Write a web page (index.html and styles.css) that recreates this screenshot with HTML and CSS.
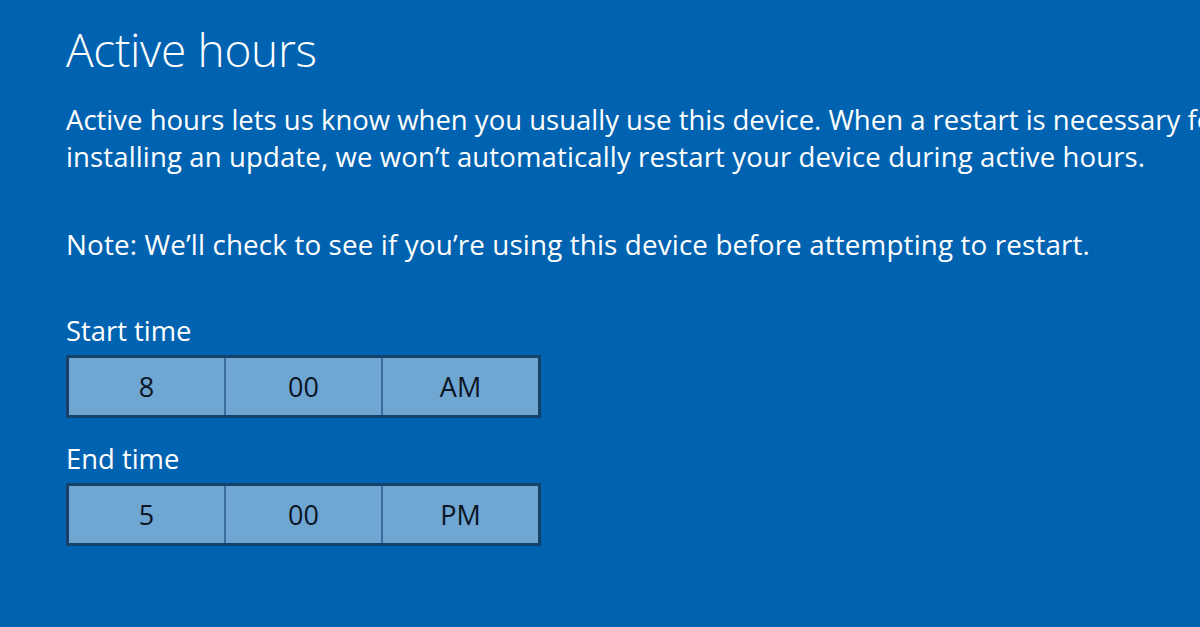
FILE: index.html
```html
<!DOCTYPE html>
<html lang="en">
<head>
    <meta charset="UTF-8">
    <meta name="viewport" content="width=device-width, initial-scale=1.0">
    <title>Active hours</title>
    <link rel="stylesheet" href="styles.css">
</head>
<body>
    <div class="settings-page">
        <h1>Active hours</h1>
        <p class="desc">
            <span class="line">Active hours lets us know when you usually use this device. When a restart is necessary for</span>
            <span class="line line-2">installing an update, we won’t automatically restart your device during active hours.</span>
        </p>
        <p class="note">Note: We’ll check to see if you’re using this device before attempting to restart.</p>

        <div class="time-field">
            <div class="field-label">Start time</div>
            <div class="time-picker">
                <div class="cell">8</div>
                <div class="cell">00</div>
                <div class="cell">AM</div>
            </div>
        </div>

        <div class="time-field">
            <div class="field-label">End time</div>
            <div class="time-picker">
                <div class="cell">5</div>
                <div class="cell">00</div>
                <div class="cell">PM</div>
            </div>
        </div>
    </div>
</body>
</html>
```

FILE: styles.css
```css
* {
    margin: 0;
    padding: 0;
    box-sizing: border-box;
}

html, body {
    width: 1200px;
    height: 627px;
    overflow: hidden;
}

body {
    background: #0063b1;
    color: #ffffff;
    font-family: 'Open Sans', 'Noto Sans', sans-serif;
}

.settings-page {
    padding: 21px 0 0 66px;
}

h1 {
    font-weight: 300;
    font-size: 46px;
    line-height: 56px;
    letter-spacing: -0.3px;
}

.desc {
    margin-top: 24px;
    font-size: 27.5px;
    line-height: 37px;
    white-space: nowrap;
}

.desc .line {
    display: block;
}

.desc .line-2 {
    letter-spacing: 0.14px;
}

.note {
    margin-top: 51px;
    font-size: 27.8px;
    line-height: 37px;
    letter-spacing: 0.13px;
    white-space: nowrap;
}

.time-field {
    margin-top: 50px;
}

.time-field + .time-field {
    margin-top: 23px;
}

.field-label {
    font-size: 27.4px;
    line-height: 36px;
    margin-bottom: 6px;
}

.time-picker {
    display: flex;
    width: 475px;
    height: 63px;
    border: 3px solid #16416b;
    background: #3b6e9c;
    gap: 2px;
}

.cell {
    flex: 1;
    background: #6fa6d2;
    color: #0b1523;
    font-size: 27px;
    display: flex;
    align-items: center;
    justify-content: center;
}
```
